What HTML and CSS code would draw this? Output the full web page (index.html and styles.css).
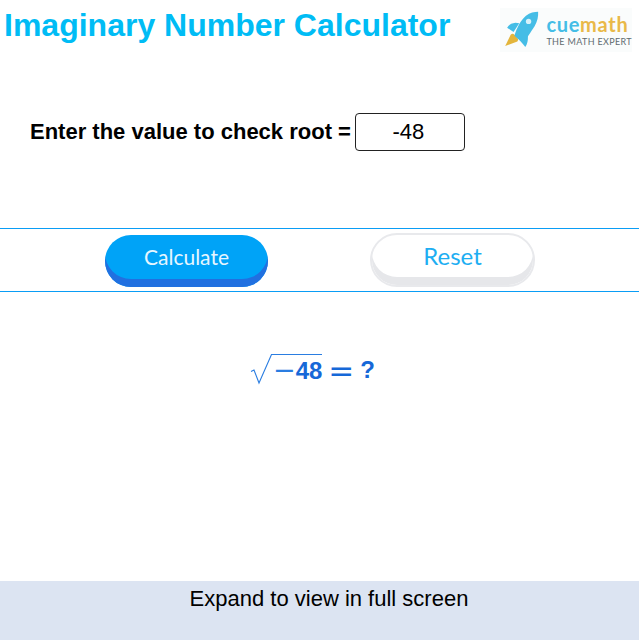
FILE: index.html
```html
<!DOCTYPE html>
<html lang="en">
<head>
    <meta charset="UTF-8">
    <meta name="viewport" content="width=device-width, initial-scale=1.0">
    <title>Imaginary Number Calculator</title>
    <link rel="stylesheet" href="styles.css">
</head>
<body>
    <div class="page">
        <div class="header">
            <h1 class="title">Imaginary Number Calculator</h1>
            <div class="logo">
                <svg class="rocket" width="38" height="40" viewBox="0 0 38 40">
                    <path d="M2.3 36.7 L8 25 Q10 23 12 25 L15 28 Q16.5 30 15 32 Z" fill="#e3b53c"/>
                    <path d="M4.3 17.7 Q7 13 13 12.5 L17 13 L11 22 Z" fill="#45bde6"/>
                    <path d="M23.3 37.7 Q26.5 33 26 26 L25 21 L17 30 Z" fill="#45bde6"/>
                    <path d="M12 26 C14 18 19 9 24 5 C28 2 33 1 36.7 1 C37 6 36 11 33 16 C29 22 24 30 21 34 Z" fill="#45bde6"/>
                    <circle cx="26.7" cy="11" r="2.8" fill="#d8f1fa"/>
                </svg>
                <div class="logo-text">
                    <div class="logo-name"><span class="cue">cue</span><span class="math">math</span></div>
                    <div class="logo-tag">THE MATH EXPERT</div>
                </div>
            </div>
        </div>
        <div class="entry">
            <label class="entry-label" for="value">Enter the value to check root =</label>
            <input class="entry-input" id="value" type="text" value="-48">
        </div>
        <div class="actions">
            <button class="btn btn-calc">Calculate</button>
            <button class="btn btn-reset">Reset</button>
        </div>
        <div class="result">
            <span class="radical">
                <svg class="radical-sign" width="23" height="31" viewBox="0 0 23 31">
                    <path d="M1 17.5 L4 16 L9 29 L21.5 0.5 L23 0.5" fill="none" stroke="#2a7de1" stroke-width="1.1"/>
                </svg>
                <span class="radicand"><span class="minus">&minus;</span>48</span>
            </span>
            <span class="equals">=</span>
            <span class="unknown">?</span>
        </div>
        <div class="footer">Expand to view in full screen</div>
    </div>
</body>
</html>
```

FILE: styles.css
```css
* {
    box-sizing: border-box;
}

body {
    margin: 0;
    background: #fff;
    font-family: "Liberation Sans", Arial, sans-serif;
}

.page {
    display: flex;
    flex-direction: column;
    height: 640px;
    overflow: hidden;
}

.header {
    display: flex;
    justify-content: space-between;
    height: 60px;
    padding: 7px 7px 0 4px;
}

.title {
    margin: 0;
    font-size: 32px;
    line-height: 36px;
    font-weight: 700;
    color: #00bcf5;
}

.logo {
    display: flex;
    align-items: center;
    gap: 7px;
    width: 132px;
    height: 44px;
    margin-top: 1px;
    padding: 0 0 0 3px;
    background: #fafcfc;
}

.logo-text {
    align-self: flex-start;
    margin-top: 5px;
    white-space: nowrap;
}

.logo-name {
    font-family: Lato, sans-serif;
    font-size: 20px;
    line-height: 23px;
    font-weight: 700;
    letter-spacing: 0.7px;
}

.cue {
    color: #45bde6;
}

.math {
    color: #e9b949;
}

.logo-tag {
    font-family: Lato, sans-serif;
    font-size: 9px;
    line-height: 12px;
    letter-spacing: 0.35px;
    color: #5f6b70;
}

.entry {
    display: flex;
    align-items: center;
    height: 38px;
    margin-top: 53px;
    padding-left: 30px;
    gap: 4px;
}

.entry-label {
    font-size: 22px;
    font-weight: 700;
    color: #000;
}

.entry-input {
    width: 110px;
    height: 38px;
    padding: 0 3px 0 0;
    border: 1px solid #222;
    border-radius: 4px;
    background: #fff;
    font-family: "Liberation Sans", Arial, sans-serif;
    font-size: 22px;
    color: #000;
    text-align: center;
    outline: none;
}

.actions {
    display: flex;
    align-items: flex-end;
    gap: 102px;
    height: 64px;
    margin-top: 77px;
    padding: 0 0 4px 105px;
    border-top: 1px solid #0a9df5;
    border-bottom: 1px solid #0a9df5;
}

.btn {
    font-family: Lato, sans-serif;
    font-size: 21px;
    font-weight: 400;
    border-radius: 26px;
    padding: 0 0 10px;
    cursor: pointer;
}

.btn-calc {
    width: 163px;
    height: 52px;
    border: none;
    background: #00a3f7;
    box-shadow: inset 0 -8px 0 #2170e0;
    color: #e6f6ff;
}

.btn-reset {
    width: 165px;
    height: 54px;
    border: 2px solid #e8e9ec;
    border-radius: 27px;
    background: #fff;
    box-shadow: inset 0 -8px 0 #e6e7ea;
    color: #1eaef2;
    font-size: 24px;
}

.result {
    display: flex;
    align-items: flex-start;
    justify-content: center;
    gap: 6px;
    margin-top: 62px;
    padding-right: 14px;
    height: 32px;
    color: #1668d8;
    font-weight: 700;
}

.radical {
    display: flex;
    align-items: flex-start;
}

.radicand {
    font-size: 24px;
    line-height: 30px;
    border-top: 1px solid #2a7de1;
    padding: 1px 0 0;
}

.minus {
    font-family: "DejaVu Sans", sans-serif;
    font-weight: 400;
    font-size: 27px;
    line-height: 24px;
    color: #2a7de1;
}

.equals {
    font-family: "DejaVu Sans", sans-serif;
    font-weight: 400;
    font-size: 31px;
    line-height: 32px;
}

.unknown {
    font-size: 24px;
    line-height: 32px;
}

.footer {
    margin-top: auto;
    height: 59px;
    padding: 4px 0 0 19px;
    background: #dce4f2;
    font-size: 22px;
    line-height: 27px;
    text-align: center;
    color: #000;
}
```
